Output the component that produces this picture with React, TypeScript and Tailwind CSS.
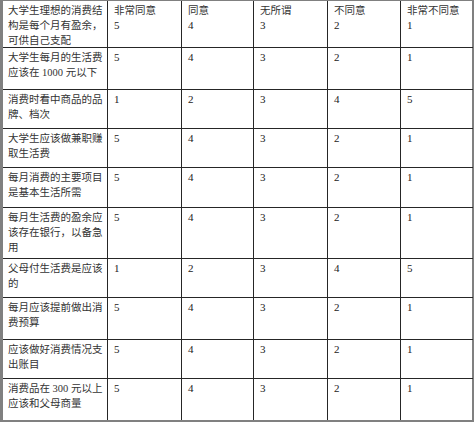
const rows: { label: string[]; values: number[] }[] = [
  { label: ["大学生每月的生活费", "应该在 1000 元以下"], values: [5, 4, 3, 2, 1] },
  { label: ["消费时看中商品的品", "牌、档次"], values: [1, 2, 3, 4, 5] },
  { label: ["大学生应该做兼职赚", "取生活费"], values: [5, 4, 3, 2, 1] },
  { label: ["每月消费的主要项目", "是基本生活所需"], values: [5, 4, 3, 2, 1] },
  { label: ["每月生活费的盈余应", "该存在银行，以备急", "用"], values: [5, 4, 3, 2, 1] },
  { label: ["父母付生活费是应该", "的"], values: [1, 2, 3, 4, 5] },
  { label: ["每月应该提前做出消", "费预算"], values: [5, 4, 3, 2, 1] },
  { label: ["应该做好消费情况支", "出账目"], values: [5, 4, 3, 2, 1] },
  { label: ["消费品在 300 元以上", "应该和父母商量"], values: [5, 4, 3, 2, 1] },
];

const headers = ["非常同意", "同意", "无所谓", "不同意", "非常不同意"];
const headerValues = [5, 4, 3, 2, 1];

function Cell({ children, lastCol, lastRow, first }: { children: React.ReactNode; lastCol?: boolean; lastRow?: boolean; first?: boolean }) {
  return (
    <div
      className={`border-[#262626] pt-[2px] ${first ? "pl-[5px]" : "pl-[6px]"} ${lastCol ? "" : "border-r"} ${lastRow ? "" : "border-b"}`}
    >
      {children}
    </div>
  );
}

export default function App() {
  return (
    <div
      className="w-[474px] h-[422px] bg-white text-[#333333] text-[10.5px] leading-[15px]"
      style={{ fontFamily: '"Liberation Serif", "Noto Sans CJK SC", serif' }}
    >
      <div className="grid grid-cols-[105px_74px_72px_74px_73px_72px] grid-rows-[47px_42px_39px_39px_40px_51px_39px_42px_39px_41px] border-t border-l-[3px] border-r-2 border-b-2 border-[#808080]">
        <Cell first>
          <div className="whitespace-nowrap">大学生理想的消费结</div>
          <div className="whitespace-nowrap">构是每个月有盈余，</div>
          <div className="whitespace-nowrap">可供自己支配</div>
        </Cell>
        {headers.map((h, i) => (
          <Cell key={h} lastCol={i === headers.length - 1}>
            <div className="whitespace-nowrap">{h}</div>
            <div className="text-[11px] text-[#222222]">{headerValues[i]}</div>
          </Cell>
        ))}
        {rows.map((row, r) => {
          const lastRow = r === rows.length - 1;
          return [
            <Cell key={`l${r}`} first lastRow={lastRow}>
              {row.label.map((line) => (
                <div key={line} className="whitespace-nowrap">
                  {line}
                </div>
              ))}
            </Cell>,
            ...row.values.map((v, i) => (
              <Cell key={`v${r}-${i}`} lastRow={lastRow} lastCol={i === row.values.length - 1}>
                <div className="text-[11px] text-[#222222]">{v}</div>
              </Cell>
            )),
          ];
        })}
      </div>
    </div>
  );
}
